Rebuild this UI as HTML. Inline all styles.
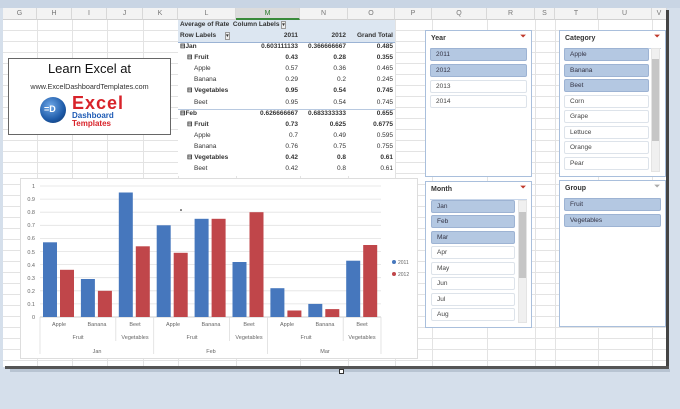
<!DOCTYPE html>
<html><head><style>
*{margin:0;padding:0;box-sizing:border-box}
body{width:680px;height:409px;background:#d5dfeb;position:relative;overflow:hidden;font-family:"Liberation Sans",sans-serif}
.abs{position:absolute}
#sheet{left:3px;top:8px;width:664px;height:359px;background:#fff;
background-image:repeating-linear-gradient(to bottom,transparent 0,transparent 10px,#e3e3e3 10px,#e3e3e3 11px);background-position:0 12px}
.colh{top:8px;height:12px;background:#f3f3f3;border-bottom:1px solid #d0d0d0;border-right:1px solid #d8d8d8;font-size:7px;color:#777;text-align:center;line-height:12px}
.vl{top:20px;width:1px;height:347px;background:#e3e3e3}
.pv{font-size:6.5px;color:#333;position:absolute;height:11px;line-height:11px;white-space:nowrap}
.b{font-weight:bold}
.r{text-align:right}
.sl{position:absolute;background:#fff;border:1px solid #a9bfdc}
.sl .t{position:absolute;left:5px;top:4px;font-size:7px;font-weight:bold;color:#333}
.sl .ln{position:absolute;left:4px;right:4px;top:17px;height:1px;background:#c8d6ea}
.it{position:absolute;height:13px;border:1px solid #dde3ea;border-radius:2px;font-size:6.5px;line-height:11px;padding-left:5px;color:#444;background:#fff}
.it.s{background:#b4c8e2;border-color:#9db3d3;color:#334}
.sb{position:absolute;background:#f0f0f0;border:1px solid #e4e4e4}
.fi{position:absolute;font-size:7px;color:#c0392b;font-weight:bold}
</style></head><body>
<div class="abs" style="left:0;top:0;width:680px;height:8px;background:#c9d5e4"></div>
<div id="sheet" class="abs"></div>
<div class="abs colh" style="left:3px;width:34px">G</div>
<div class="abs colh" style="left:37px;width:35px">H</div>
<div class="abs colh" style="left:72px;width:35px">I</div>
<div class="abs colh" style="left:107px;width:36px">J</div>
<div class="abs colh" style="left:143px;width:35px">K</div>
<div class="abs colh" style="left:178px;width:58px">L</div>
<div class="abs colh" style="left:236px;width:64px;background:#dcdcdc;color:#2a7a2a;border-bottom:2px solid #3a8a3a">M</div>
<div class="abs colh" style="left:300px;width:48px">N</div>
<div class="abs colh" style="left:348px;width:47px">O</div>
<div class="abs colh" style="left:395px;width:37px">P</div>
<div class="abs colh" style="left:432px;width:55px">Q</div>
<div class="abs colh" style="left:487px;width:48px">R</div>
<div class="abs colh" style="left:535px;width:20px">S</div>
<div class="abs colh" style="left:555px;width:43px">T</div>
<div class="abs colh" style="left:598px;width:54px">U</div>
<div class="abs colh" style="left:652px;width:15px">V</div>
<div class="abs vl" style="left:37px"></div><div class="abs vl" style="left:72px"></div><div class="abs vl" style="left:107px"></div><div class="abs vl" style="left:143px"></div><div class="abs vl" style="left:178px"></div><div class="abs vl" style="left:236px"></div><div class="abs vl" style="left:300px"></div><div class="abs vl" style="left:348px"></div><div class="abs vl" style="left:395px"></div><div class="abs vl" style="left:432px"></div><div class="abs vl" style="left:487px"></div><div class="abs vl" style="left:535px"></div><div class="abs vl" style="left:555px"></div><div class="abs vl" style="left:598px"></div><div class="abs vl" style="left:652px"></div>
<div class="abs" style="left:666px;top:10px;width:3px;height:358px;background:#444"></div>
<div class="abs" style="left:5px;top:366px;width:664px;height:3px;background:#555"></div>
<div class="abs" style="left:10px;top:369px;width:660px;height:3px;background:#b8c4d2"></div>
<div class="abs" style="left:339px;top:369px;width:5px;height:5px;border:1px solid #333;background:#fff"></div>

<div class="abs" style="left:178px;top:20px;width:217px;height:22px;background:#dce6f1"></div>
<div class="abs" style="left:178px;top:42px;width:217px;height:134px;background:#fff"></div>
<div class="abs" style="left:178px;top:42px;width:217px;height:1px;background:#9bb3d4"></div>
<div class="abs" style="left:178px;top:109px;width:217px;height:1px;background:#b8c9e0"></div>
<div class="pv b" style="left:180px;top:19px">Average of Rate&nbsp; Column Labels <span style="border:1px solid #999;background:#eee;font-size:5px">▾</span></div>
<div class="pv b" style="left:180px;top:30px">Row Labels&nbsp;&nbsp;&nbsp;&nbsp; <span style="border:1px solid #999;background:#eee;font-size:5px">▾</span></div>
<div class="pv b r" style="left:236px;top:30px;width:62px">2011</div>
<div class="pv b r" style="left:300px;top:30px;width:46px">2012</div>
<div class="pv b r" style="left:346px;top:30px;width:47px">Grand Total</div>
<div id="rows"></div>

<div class="abs" style="left:8px;top:58px;width:163px;height:77px;border:1px solid #666;background:#fff"></div>
<div class="abs" style="left:8px;top:61px;width:163px;text-align:center;font-size:13px;color:#111">Learn Excel at</div>
<div class="abs" style="left:8px;top:82px;width:163px;text-align:center;font-size:7.2px;color:#333">www.ExcelDashboardTemplates.com</div>
<div class="abs" style="left:40px;top:97px;width:26px;height:26px;border-radius:50%;background:radial-gradient(circle at 40% 35%,#6fa8e8,#1d5aa8 60%,#0c2e5e)"></div>
<div class="abs" style="left:44px;top:104px;font-size:9px;font-weight:bold;color:#fff">=D</div>
<div class="abs" style="left:72px;top:93px;font-size:18px;font-weight:bold;color:#d8232a;letter-spacing:1px">Excel</div>
<div class="abs" style="left:72px;top:111px;font-size:8px;font-weight:bold;color:#1e5bb5">Dashboard</div>
<div class="abs" style="left:72px;top:119px;font-size:8px;font-weight:bold;color:#d8232a">Templates</div>

<svg class="abs" style="left:20px;top:178px" width="398" height="181" font-family="Liberation Sans" font-size="5.5" fill="#666">
<rect x="0.5" y="0.5" width="397" height="180" fill="#fff" stroke="#ddd"/>
<g stroke="#e2e2e2" stroke-width="0.8">
<line x1="20" x2="361" y1="125.9" y2="125.9"/><line x1="20" x2="361" y1="112.8" y2="112.8"/><line x1="20" x2="361" y1="99.7" y2="99.7"/><line x1="20" x2="361" y1="86.6" y2="86.6"/><line x1="20" x2="361" y1="73.5" y2="73.5"/><line x1="20" x2="361" y1="60.4" y2="60.4"/><line x1="20" x2="361" y1="47.3" y2="47.3"/><line x1="20" x2="361" y1="34.2" y2="34.2"/><line x1="20" x2="361" y1="21.1" y2="21.1"/><line x1="20" x2="361" y1="8" y2="8"/>
</g>
<line x1="20" x2="361" y1="139" y2="139" stroke="#ccc"/>
<g text-anchor="end"><text x="15" y="141">0</text><text x="15" y="128">0.1</text><text x="15" y="115">0.2</text><text x="15" y="102">0.3</text><text x="15" y="89">0.4</text><text x="15" y="76">0.5</text><text x="15" y="62">0.6</text><text x="15" y="49">0.7</text><text x="15" y="36">0.8</text><text x="15" y="23">0.9</text><text x="15" y="10">1</text></g>
<g fill="#4677bd">
<rect x="23" y="64.3" width="14" height="74.7"/><rect x="60.9" y="101" width="14" height="38"/><rect x="98.8" y="14.5" width="14" height="124.5"/><rect x="136.7" y="47.3" width="14" height="91.7"/><rect x="174.6" y="40.8" width="14" height="98.2"/><rect x="212.5" y="84" width="14" height="55"/><rect x="250.4" y="110.2" width="14" height="28.8"/><rect x="288.3" y="125.9" width="14" height="13.1"/><rect x="326.2" y="82.7" width="14" height="56.3"/>
</g>
<g fill="#c0464a">
<rect x="40" y="91.8" width="14" height="47.2"/><rect x="77.9" y="112.8" width="14" height="26.2"/><rect x="115.8" y="68.3" width="14" height="70.7"/><rect x="153.7" y="74.8" width="14" height="64.2"/><rect x="191.6" y="40.8" width="14" height="98.2"/><rect x="229.5" y="34.2" width="14" height="104.8"/><rect x="267.4" y="132.5" width="14" height="6.5"/><rect x="305.3" y="131.1" width="14" height="7.9"/><rect x="343.2" y="67" width="14" height="72"/>
</g>
<g stroke="#ddd" stroke-width="0.8">
<line x1="20" x2="20" y1="139" y2="176"/><line x1="95.8" x2="95.8" y1="139" y2="163"/><line x1="133.7" x2="133.7" y1="139" y2="176"/><line x1="209.5" x2="209.5" y1="139" y2="163"/><line x1="247.4" x2="247.4" y1="139" y2="176"/><line x1="323.2" x2="323.2" y1="139" y2="163"/><line x1="361" x2="361" y1="139" y2="176"/>
</g>
<g text-anchor="middle">
<text x="39" y="148">Apple</text><text x="77" y="148">Banana</text><text x="115" y="148">Beet</text><text x="153" y="148">Apple</text><text x="191" y="148">Banana</text><text x="229" y="148">Beet</text><text x="267" y="148">Apple</text><text x="305" y="148">Banana</text><text x="342" y="148">Beet</text>
<text x="58" y="161">Fruit</text><text x="115" y="161">Vegetables</text><text x="172" y="161">Fruit</text><text x="229" y="161">Vegetables</text><text x="286" y="161">Fruit</text><text x="342" y="161">Vegetables</text>
<text x="77" y="175">Jan</text><text x="191" y="175">Feb</text><text x="305" y="175">Mar</text>
</g>
<circle cx="374" cy="84" r="2" fill="#4677bd"/><text x="378" y="86" font-size="5">2011</text>
<circle cx="374" cy="96" r="2" fill="#c0464a"/><text x="378" y="98" font-size="5">2012</text>
<circle cx="161" cy="32" r="0.8" fill="#000"/>
</svg>

<div class="sl" style="left:425px;top:30px;width:107px;height:147px"><div class="t">Year</div><div class="fi" style="right:5px;top:2px">⏷</div><div class="ln"></div>
<div class="it s" style="left:4px;top:17px;width:97px">2011</div>
<div class="it s" style="left:4px;top:33px;width:97px">2012</div>
<div class="it" style="left:4px;top:49px;width:97px">2013</div>
<div class="it" style="left:4px;top:64px;width:97px">2014</div></div>

<div class="sl" style="left:559px;top:30px;width:107px;height:147px"><div class="t">Category</div><div class="fi" style="right:5px;top:2px">⏷</div><div class="ln"></div>
<div class="it s" style="left:4px;top:17px;width:85px">Apple</div>
<div class="it s" style="left:4px;top:33px;width:85px">Banana</div>
<div class="it s" style="left:4px;top:48px;width:85px">Beet</div>
<div class="it" style="left:4px;top:64px;width:85px">Corn</div>
<div class="it" style="left:4px;top:79px;width:85px">Grape</div>
<div class="it" style="left:4px;top:95px;width:85px">Lettuce</div>
<div class="it" style="left:4px;top:110px;width:85px">Orange</div>
<div class="it" style="left:4px;top:126px;width:85px">Pear</div>
<div class="sb" style="left:91px;top:17px;width:9px;height:124px"></div>
<div class="abs" style="left:92px;top:28px;width:7px;height:82px;background:#c6c6c6"></div></div>

<div class="sl" style="left:425px;top:181px;width:107px;height:147px"><div class="t">Month</div><div class="fi" style="right:5px;top:2px">⏷</div><div class="ln"></div>
<div class="it s" style="left:5px;top:18px;width:84px">Jan</div>
<div class="it s" style="left:5px;top:33px;width:84px">Feb</div>
<div class="it s" style="left:5px;top:49px;width:84px">Mar</div>
<div class="it" style="left:5px;top:64px;width:84px">Apr</div>
<div class="it" style="left:5px;top:80px;width:84px">May</div>
<div class="it" style="left:5px;top:95px;width:84px">Jun</div>
<div class="it" style="left:5px;top:111px;width:84px">Jul</div>
<div class="it" style="left:5px;top:126px;width:84px">Aug</div>
<div class="sb" style="left:92px;top:18px;width:9px;height:123px"></div>
<div class="abs" style="left:93px;top:30px;width:7px;height:66px;background:#c6c6c6"></div></div>

<div class="sl" style="left:559px;top:180px;width:107px;height:147px"><div class="t">Group</div><div class="fi" style="right:5px;top:2px;color:#aaa">⏷</div><div class="ln"></div>
<div class="it s" style="left:4px;top:17px;width:97px">Fruit</div>
<div class="it s" style="left:4px;top:33px;width:97px">Vegetables</div></div>

<script>
var d=[["⊟Jan",0,1,"0.603111133","0.366666667","0.485"],["⊟ Fruit",1,1,"0.43","0.28","0.355"],["Apple",2,0,"0.57","0.36","0.465"],["Banana",2,0,"0.29","0.2","0.245"],["⊟ Vegetables",1,1,"0.95","0.54","0.745"],["Beet",2,0,"0.95","0.54","0.745"],["⊟Feb",0,1,"0.626666667","0.683333333","0.655"],["⊟ Fruit",1,1,"0.73","0.625","0.6775"],["Apple",2,0,"0.7","0.49","0.595"],["Banana",2,0,"0.76","0.75","0.755"],["⊟ Vegetables",1,1,"0.42","0.8","0.61"],["Beet",2,0,"0.42","0.8","0.61"]];
var h="";d.forEach(function(r,i){var y=41+i*11.1;var c=r[2]?" b":"";
h+='<div class="pv'+c+'" style="left:'+(180+r[1]*7)+'px;top:'+y+'px">'+r[0]+'</div>';
h+='<div class="pv r'+c+'" style="left:236px;top:'+y+'px;width:62px">'+r[3]+'</div>';
h+='<div class="pv r'+c+'" style="left:300px;top:'+y+'px;width:46px">'+r[4]+'</div>';
h+='<div class="pv r'+c+'" style="left:346px;top:'+y+'px;width:47px">'+r[5]+'</div>';});
document.getElementById("rows").outerHTML=h;
</script>
</body></html>
